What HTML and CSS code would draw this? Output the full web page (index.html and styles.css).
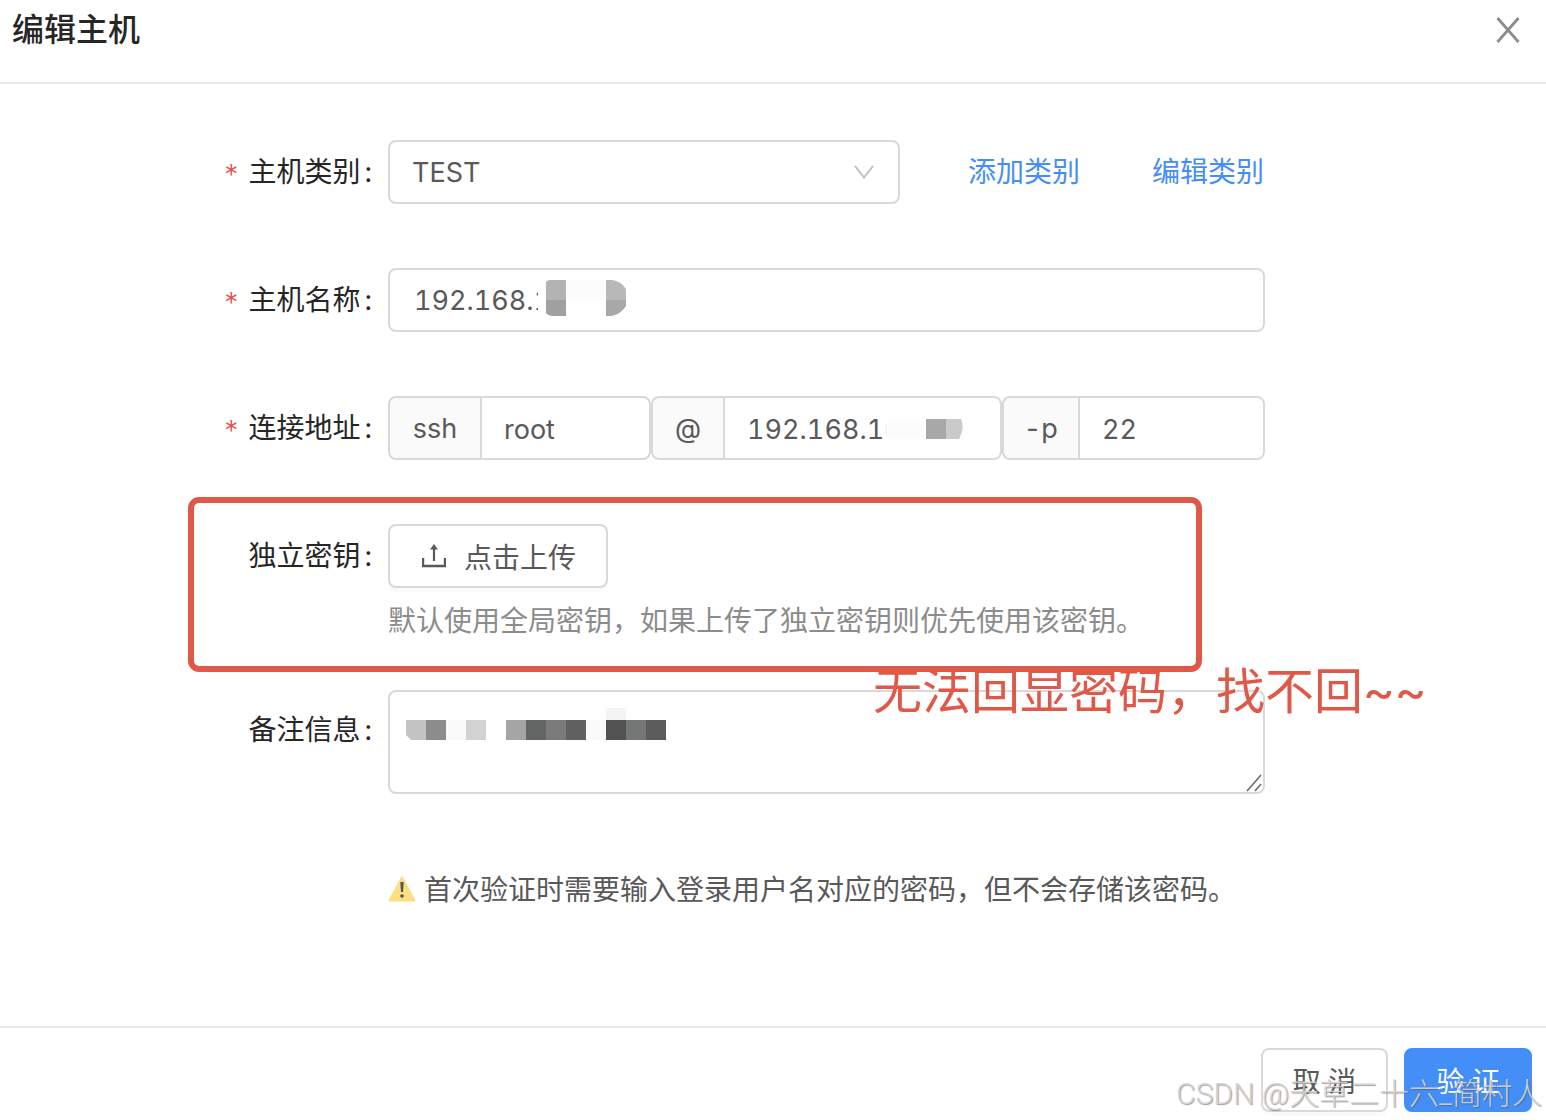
FILE: index.html
```html
<!DOCTYPE html>
<html lang="zh-CN">
<head>
  <meta charset="utf-8">
  <title>编辑主机</title>
  <link rel="stylesheet" href="styles.css">
</head>
<body>
  <div class="modal">
    <header class="modal-header">
      <h1>编辑主机</h1>
      <button type="button" class="close" aria-label="关闭">
        <svg width="24" height="26" viewBox="0 0 24 26"><path d="M1.500 1L22.500 25M22.500 1L1.500 25" stroke="#8c8c8c" stroke-width="2.800" fill="none"/></svg>
      </button>
    </header>

    <form id="host-form">
      <div class="row">
        <label class="required" for="zone">主机类别</label>
        <div class="control category">
          <div class="select-wrap">
            <select id="zone">
              <option>TEST</option>
            </select>
            <svg class="arrow" width="20" height="14" viewBox="0 0 20 14"><path d="M1 1L10 12.500L19 1" stroke="#bfbfbf" stroke-width="2" fill="none"/></svg>
          </div>
          <a href="#">添加类别</a>
          <a href="#">编辑类别</a>
        </div>
      </div>

      <div class="row">
        <label class="required" for="name">主机名称</label>
        <div class="control">
          <input type="text" id="name" value="192.168.1">
          <svg class="mask mask-name" width="90" height="38" viewBox="0 0 90 38">
            <path d="M0 38V9Q4 0 14 0H90V38Z" fill="#fff"/>
            <rect x="8" y="1" width="60" height="20" fill="#fcfcfc"/>
            <path d="M8 3Q9 1 12 1H28V21H8Z" fill="#b3b3b3"/>
            <path d="M8 21H28V37H16Q10 37 8 34Z" fill="#a0a0a0"/>
            <path d="M68 1H74Q83 2 88 10V21H68Z" fill="#b8b8b8"/>
            <path d="M68 21H88V27Q82 36 73 37H68Z" fill="#a8a8a8"/>
          </svg>
        </div>
      </div>

      <div class="row">
        <label class="required" for="username">连接地址</label>
        <div class="control address">
          <div class="group">
            <span class="addon addon-ssh">ssh</span>
            <input type="text" id="username" value="root">
          </div>
          <div class="group group-host">
            <span class="addon addon-at">@</span>
            <input type="text" id="hostname" aria-label="主机地址" value="192.168.10">
            <svg class="mask mask-host" width="78" height="30" viewBox="0 0 78 30">
              <path d="M3 0H78V30H3Q-1 15 3 0Z" fill="#fff"/>
              <rect x="3" y="5" width="36" height="20" fill="#fcfcfc"/>
              <rect x="41" y="5" width="20" height="20" fill="#a8a8a8"/>
              <path d="M61 5H76Q80 14 74 25H61Z" fill="#cacaca"/>
            </svg>
          </div>
          <div class="group">
            <span class="addon addon-port">-p</span>
            <input type="text" id="port" aria-label="端口" value="22">
          </div>
        </div>
      </div>

      <div class="row row-key">
        <label for="upload">独立密钥</label>
        <div class="control">
          <button type="button" id="upload" class="btn btn-upload">
            <svg width="24" height="24" viewBox="0 0 24 24"><path d="M1 14V22H23V14" stroke="#595959" stroke-width="2.400" fill="none"/><path d="M12 17V4" stroke="#595959" stroke-width="2.200"/><path d="M12 0L16 5.500H8Z" fill="#595959"/></svg>
            <span>点击上传</span>
          </button>
          <p class="help">默认使用全局密钥，如果上传了独立密钥则优先使用该密钥。</p>
        </div>
        <div class="highlight"></div>
        <div class="remark">无法回显密码，找不回~~</div>
      </div>

      <div class="row row-desc">
        <label for="desc">备注信息</label>
        <div class="control">
          <textarea id="desc"></textarea>
          <svg class="mask mask-desc" width="260" height="32" viewBox="0 0 260 32">
            <path d="M0 12H20V32H5L0 27Z" fill="#c3c3c3"/>
            <rect x="20" y="12" width="20" height="20" fill="#8c8c8c"/>
            <rect x="40" y="12" width="20" height="20" fill="#fafafa"/>
            <rect x="60" y="12" width="20" height="20" fill="#d2d2d2"/>
            <rect x="100" y="12" width="20" height="20" fill="#a5a5a5"/>
            <rect x="120" y="12" width="20" height="20" fill="#626564"/>
            <rect x="140" y="12" width="20" height="20" fill="#7a7a7a"/>
            <rect x="160" y="12" width="20" height="20" fill="#616161"/>
            <rect x="180" y="12" width="20" height="20" fill="#fafafa"/>
            <rect x="200" y="0" width="20" height="12" fill="#f4f4f4"/>
            <rect x="200" y="12" width="20" height="20" fill="#525252"/>
            <rect x="220" y="12" width="20" height="20" fill="#747776"/>
            <rect x="240" y="12" width="20" height="20" fill="#5c5c5c"/>
          </svg>
          <svg class="grip" width="16" height="18" viewBox="0 0 16 18"><path d="M1 17L15 1M9 17L15 10" stroke="#666" stroke-width="1.500"/></svg>
        </div>
      </div>

      <div class="row row-tip">
        <p class="tip">
          <svg width="28" height="28" viewBox="0 0 28 28"><path d="M14 1.500L26.500 24.500H1.500Z" fill="#fbdf83" stroke="#fbdf83" stroke-width="2" stroke-linejoin="round"/><path d="M12.300 6H15.700L15 16H13Z" fill="#555"/><circle cx="14" cy="20" r="1.800" fill="#555"/></svg>
          <span>首次验证时需要输入登录用户名对应的密码，但不会存储该密码。</span>
        </p>
      </div>
    </form>

    <footer class="modal-footer">
      <button type="button" class="btn btn-footer">取 消</button>
      <button type="submit" form="host-form" class="btn btn-footer btn-primary">验 证</button>
    </footer>

    <div class="watermark">CSDN @天草二十六_简村人</div>
  </div>
</body>
</html>
```

FILE: styles.css
```css
* {
  box-sizing: border-box;
}

body {
  margin: 0;
  background-color: #fff;
  color: #595959;
  font-family: Inter, "Noto Sans CJK SC", sans-serif;
  font-size: 28px;
  font-variant-numeric: tabular-nums;
}

h1,
p {
  margin: 0;
}

.modal {
  position: relative;
  overflow: hidden;
}

.modal-header {
  display: flex;
  justify-content: space-between;
  padding: 8px 26px 30px 12px;
  border-bottom: 2px solid #e8e8e8;
}

h1 {
  color: #262626;
  font-size: 32px;
  font-weight: 500;
  line-height: 44px;
}

.close {
  display: flex;
  align-items: center;
  padding: 0;
  border: none;
  background: none;
  cursor: pointer;
}

form {
  padding: 56px 0 104px;
}

.row {
  position: relative;
  display: grid;
  grid-template-columns: 388px 1fr;
  margin-bottom: 64px;
  padding-right: 281px;
}

.row-key {
  margin-bottom: 48px;
}

.row-tip {
  margin-bottom: 0;
}

label {
  padding-right: 16px;
  color: #262626;
  line-height: 64px;
  text-align: right;
}

label::after {
  content: ":";
  margin-left: 4px;
}

.row-desc label {
  padding-top: 8px;
}

.required::before {
  content: "*";
  margin-right: 8px;
  color: #e94b4b;
  font-weight: 300;
  line-height: 1;
  vertical-align: -3px;
}

.control {
  position: relative;
}

input,
select,
textarea {
  display: block;
  width: 100%;
  height: 64px;
  padding: 0 24px;
  border: 2px solid #d9d9d9;
  border-radius: 8px;
  background-color: #fff;
  color: #595959;
  font: inherit;
  font-size: 27px;
  font-variant-numeric: tabular-nums;
}

select {
  padding: 0 22px;
  appearance: none;
}

textarea {
  height: 104px;
  padding: 8px 24px;
  resize: none;
}

a {
  color: #448ef7;
  text-decoration: none;
}

.category {
  display: flex;
  align-items: center;
}

.category a {
  margin-left: 72px;
  line-height: 64px;
}

.category .select-wrap + a {
  margin-left: 68px;
}

.select-wrap {
  position: relative;
  flex: 0 1 512px;
}

.arrow {
  position: absolute;
  top: 25px;
  right: 26px;
  pointer-events: none;
}

.address {
  display: flex;
}

.group {
  position: relative;
  display: flex;
  width: 30%;
}

.group-host {
  width: 40%;
}

.addon {
  flex: none;
  width: 92px;
  height: 64px;
  border: 2px solid #d9d9d9;
  border-right: none;
  border-radius: 8px 0 0 8px;
  background-color: #fafafa;
  font-size: 27px;
  line-height: 62px;
  text-align: center;
}

.addon-at {
  width: 72px;
}

.addon-port {
  width: 76px;
}

.group input {
  flex: 1;
  min-width: 0;
  padding: 2px 22px 0;
  border-radius: 0 8px 8px 0;
}

/* pixelated patches over the private values */
.mask {
  position: absolute;
}

.mask-name {
  top: 11px;
  left: 150px;
}

.mask-host {
  top: 18px;
  left: 234px;
}

.mask-desc {
  top: 18px;
  left: 18px;
}

.grip {
  position: absolute;
  right: 3px;
  bottom: 2px;
}

.btn {
  height: 64px;
  border: 2px solid #d9d9d9;
  border-radius: 8px;
  background-color: #fff;
  box-shadow: 0 4px 0 rgba(0, 0, 0, 0.02);
  color: #595959;
  font: inherit;
  cursor: pointer;
}

.btn-upload {
  display: flex;
  align-items: center;
  gap: 18px;
  padding: 0 30px 0 32px;
}

.help {
  margin-top: 12px;
  color: #8c8c8c;
  line-height: 42px;
  white-space: nowrap;
}

.highlight {
  position: absolute;
  top: -27px;
  right: 344px;
  bottom: -30px;
  left: 188px;
  border: 6px solid #e05948;
  border-radius: 11px;
  pointer-events: none;
}

.remark {
  position: absolute;
  top: 132px;
  left: 873px;
  z-index: 1;
  color: #e05948;
  font-size: 49px;
  line-height: 72px;
  white-space: nowrap;
}

.tip {
  display: flex;
  grid-column: 2;
  align-items: center;
  gap: 8px;
  line-height: 64px;
  white-space: nowrap;
}

.modal-footer {
  display: flex;
  justify-content: flex-end;
  gap: 16px;
  padding: 20px 14px 8px;
  border-top: 2px solid #e8e8e8;
}

.btn-footer {
  width: 127px;
  padding: 0;
}

.btn-primary {
  width: 128px;
  border-color: #448ef7;
  background-color: #448ef7;
  color: #fff;
}

.watermark {
  position: absolute;
  right: 4px;
  bottom: 6px;
  color: rgba(215, 215, 215, 0.9);
  font-family: Roboto, "Noto Sans CJK SC", sans-serif;
  font-size: 30px;
  font-weight: 300;
  line-height: 40px;
  text-shadow: 1px 1px 1px rgba(90, 90, 90, 0.6);
  pointer-events: none;
}
```
